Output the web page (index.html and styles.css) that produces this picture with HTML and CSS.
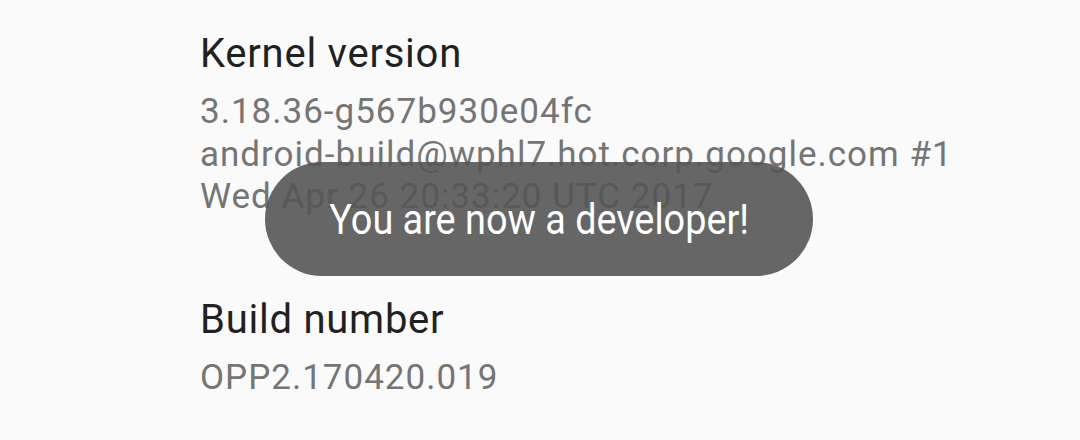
FILE: index.html
```html
<!DOCTYPE html>
<html lang="en">
<head>
  <meta charset="UTF-8" />
  <title>About phone</title>
  <link rel="stylesheet" href="styles.css">
</head>
<body>
  <div class="list">
    <div class="item">
      <div class="title">Kernel version</div>
      <div class="summary">3.18.36-g567b930e04fc<br>android-build@wphl7.hot.corp.google.com #1<br>Wed Apr 26 20:33:20 UTC 2017</div>
    </div>
    <div class="item">
      <div class="title">Build number</div>
      <div class="summary">OPP2.170420.019</div>
    </div>
  </div>
  <div class="toast"><span class="toast-text">You are now a developer!</span></div>
</body>
</html>
```

FILE: styles.css
```css
body {
  margin: 0;
  background: #fafafa;
  font-family: Roboto, 'Noto Sans', sans-serif;
  width: 1080px;
  height: 440px;
  overflow: hidden;
  position: relative;
}
.list {
  padding-left: 200px;
}
.item {
  padding: 30px 0 47px 0;
}
.title {
  font-size: 40px;
  line-height: 48px;
  letter-spacing: 0.75px;
  color: #212121;
}
.summary {
  margin-top: 13px;
  font-size: 35px;
  line-height: 42.5px;
  letter-spacing: 1px;
  color: #757575;
}
/* toast floats over the list */
.toast {
  position: absolute;
  left: 265px;
  top: 162px;
  width: 548px;
  height: 114px;
  border-radius: 57px;
  background: rgba(85, 85, 85, 0.9);
  display: flex;
  justify-content: center;
  align-items: center;
}
.toast-text {
  display: inline-block;
  font-size: 42px;
  color: #fff;
  white-space: nowrap;
  transform: scaleX(0.9);
}
```
